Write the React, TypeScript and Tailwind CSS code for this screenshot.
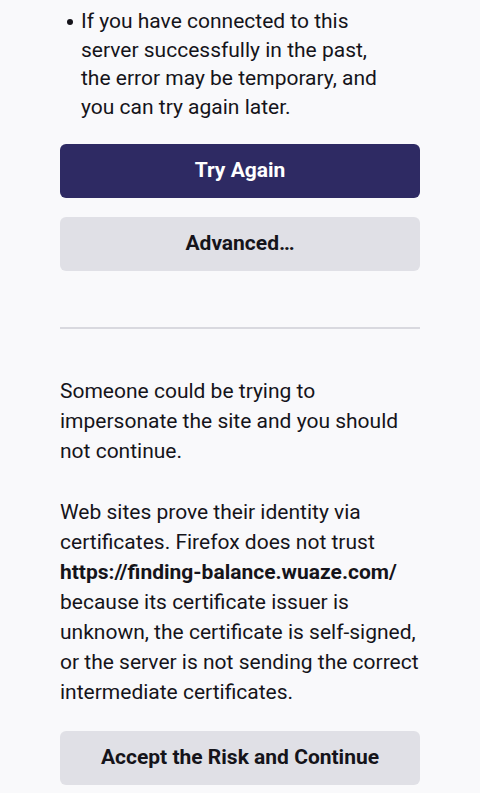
export default function App() {
  return (
    <div
      className="min-h-[793px] bg-[#f9f9fb] text-[#15141a]"
      style={{ fontFamily: "Roboto, 'Noto Sans', sans-serif" }}
    >
      <div className="px-[60px] pt-[7px]">
        <ul className="pr-[28px] text-[21px] leading-[28.5px]">
          <li className="flex">
            <span className="w-[21px] shrink-0 pl-[7px] pt-[12px]">
              <span className="block h-[6px] w-[6px] rounded-full bg-[#15141a]" />
            </span>
            <span>
              If you have connected to this server successfully in the past, the error may be
              temporary, and you can try again later.
            </span>
          </li>
        </ul>

        <div className="mt-[23px] flex flex-col gap-[19px]">
          <button className="h-[54px] w-full rounded-[6px] bg-[#2e2a63] text-[21px] font-bold text-white">
            Try Again
          </button>
          <button className="h-[54px] w-full rounded-[6px] bg-[#e0e0e6] text-[21px] font-bold text-[#15141a]">
            Advanced…
          </button>
        </div>

        <hr className="mt-[56px] border-t-2 border-[#d9d9df]" />

        <div className="mt-[47px] text-[21px] leading-[30px]">
          <p>Someone could be trying to impersonate the site and you should not continue.</p>
          <p className="mt-[31px]">
            Web sites prove their identity via certificates. Firefox does not trust{" "}
            <b>https://finding-balance.wuaze.com/</b> because its certificate issuer is unknown,
            the certificate is self-signed, or the server is not sending the correct intermediate
            certificates.
          </p>
        </div>

        <button className="mt-[24px] h-[54px] w-full rounded-[6px] bg-[#e0e0e6] text-[21px] font-bold text-[#15141a]">
          Accept the Risk and Continue
        </button>
      </div>
    </div>
  );
}
